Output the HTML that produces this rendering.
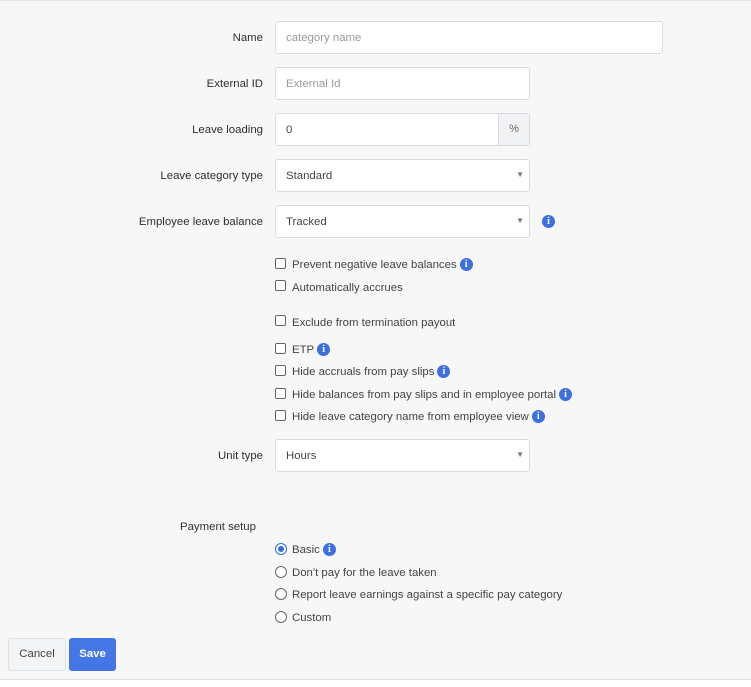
<!DOCTYPE html>
<html><head><style>
body{margin:0;width:751px;height:687px;background:#fff;font-family:"Liberation Sans",sans-serif;font-size:11.4px;color:#444;position:relative;overflow:hidden}
.bg{position:absolute;left:0;top:0;width:751px;height:680px;background:#f7f7f8;border-top:1px solid #e3e7ee;border-bottom:1px solid #dde3ec;box-sizing:border-box}
.a{position:absolute}
.lbl{position:absolute;right:488px;text-align:right;font-size:11.4px;color:#2f2f2f;white-space:nowrap}
.in{position:absolute;left:275px;height:33px;background:#fff;border:1px solid #d8dbe0;border-radius:3px;box-sizing:border-box;padding:0 10px;line-height:33px;font-size:11.4px;color:#444}
.ph{color:#999}
.car{position:absolute;right:5px;top:-2px;font-size:8px;color:#777}
.cb{position:absolute;left:275px;width:11px;height:11px;border:1px solid #666;border-radius:2px;background:#fff;box-sizing:border-box}
.rd{position:absolute;left:275px;width:12px;height:12px;border:1px solid #666;border-radius:50%;background:#fff;box-sizing:border-box}
.t{position:absolute;left:292px;font-size:11.4px;color:#444;white-space:nowrap;line-height:14px}
.i{display:inline-block;width:13px;height:13px;border-radius:50%;background:#3e6fe0;color:#fff;font-size:10px;font-weight:bold;text-align:center;line-height:13px;vertical-align:top;margin-left:3px;font-family:"Liberation Serif",serif}
</style></head><body>
<div class="bg"></div>
<div class="lbl" style="top:32px">Name</div>
<div class="in ph" style="top:21px;width:388px">category name</div>
<div class="lbl" style="top:78px">External ID</div>
<div class="in ph" style="top:67px;width:255px">External Id</div>
<div class="lbl" style="top:124px">Leave loading</div>
<div class="in" style="top:113px;width:255px">0<div style="position:absolute;right:0;top:0;width:30px;height:31px;line-height:31px;background:#f1f2f4;border-left:1px solid #d8dbe0;text-align:center;font-size:11px;color:#666">%</div></div>
<div class="lbl" style="top:170px">Leave category type</div>
<div class="in" style="top:159px;width:255px">Standard<span class="car">▼</span></div>
<div class="lbl" style="top:216px">Employee leave balance</div>
<div class="in" style="top:205px;width:255px">Tracked<span class="car">▼</span></div>
<span class="i a" style="left:539px;top:215px">i</span>

<div class="cb" style="top:258px"></div><div class="t" style="top:258px">Prevent negative leave balances<span class="i">i</span></div>
<div class="cb" style="top:280px"></div><div class="t" style="top:281px">Automatically accrues</div>
<div class="cb" style="top:315px"></div><div class="t" style="top:316px">Exclude from termination payout</div>
<div class="cb" style="top:343px"></div><div class="t" style="top:343px">ETP<span class="i">i</span></div>
<div class="cb" style="top:365px"></div><div class="t" style="top:365px">Hide accruals from pay slips<span class="i">i</span></div>
<div class="cb" style="top:388px"></div><div class="t" style="top:388px">Hide balances from pay slips and in employee portal<span class="i">i</span></div>
<div class="cb" style="top:410px"></div><div class="t" style="top:410px">Hide leave category name from employee view<span class="i">i</span></div>

<div class="lbl" style="top:450px">Unit type</div>
<div class="in" style="top:439px;width:255px">Hours<span class="car">▼</span></div>

<div class="a" style="left:180px;top:521px;color:#2f2f2f">Payment setup</div>
<div class="rd" style="top:543px;border-color:#2a70e8"><div style="position:absolute;left:2px;top:2px;width:6px;height:6px;border-radius:50%;background:#2a70e8"></div></div><div class="t" style="top:543px">Basic<span class="i">i</span></div>
<div class="rd" style="top:566px"></div><div class="t" style="top:566px">Don't pay for the leave taken</div>
<div class="rd" style="top:588px"></div><div class="t" style="top:588px">Report leave earnings against a specific pay category</div>
<div class="rd" style="top:611px"></div><div class="t" style="top:611px">Custom</div>

<div class="a" style="left:8px;top:638px;width:58px;height:33px;box-sizing:border-box;border:1px solid #dcdfe4;border-radius:3px;background:#f3f4f6;text-align:center;line-height:31px;color:#444">Cancel</div>
<div class="a" style="left:69px;top:638px;width:47px;height:33px;border-radius:3px;background:#4576e6;color:#fff;font-weight:bold;text-align:center;line-height:33px">Save</div>
</body></html>
